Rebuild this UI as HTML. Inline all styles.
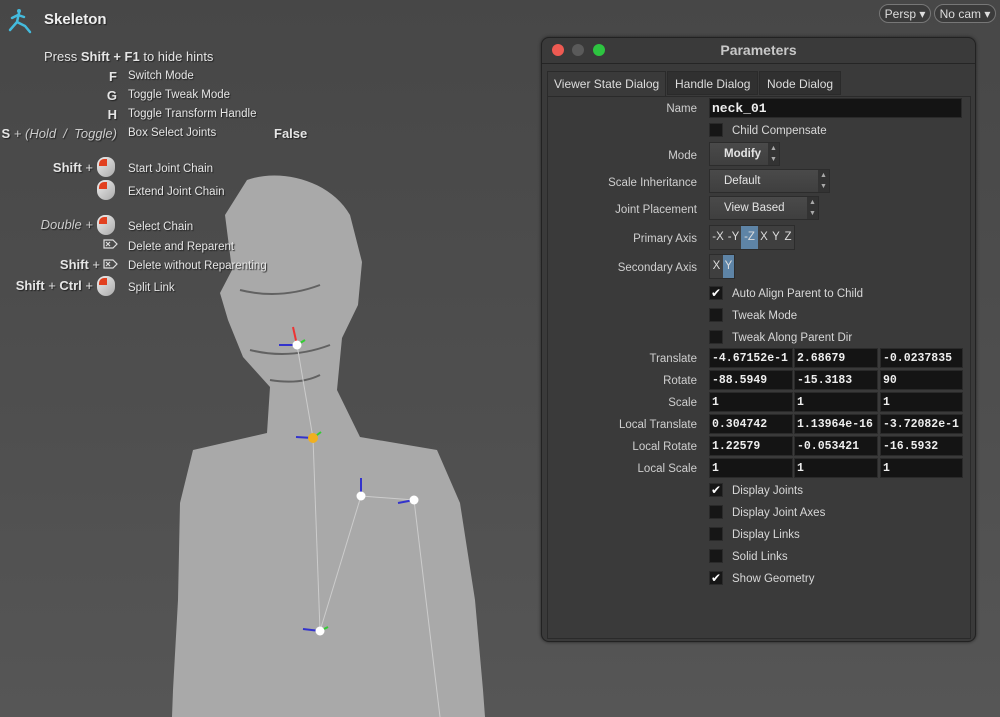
<!DOCTYPE html>
<html><head><meta charset="utf-8"><style>
*{box-sizing:border-box;margin:0;padding:0}
body{width:1000px;height:717px;overflow:hidden;position:relative;font-family:"Liberation Sans","DejaVu Sans",sans-serif;background:linear-gradient(#474747,#4f4f4f 60%,#565656);color:#ddd}
.a{position:absolute;white-space:nowrap}
.h{font-size:11.5px;color:#e6e6e6;text-shadow:1px 1px 1px #222}
.k{font-size:13px;font-weight:bold;color:#e6e6e6;text-shadow:1px 1px 1px #222;text-align:right}
.mouse{position:absolute;width:18px;height:20px;border-radius:8px 8px 9px 9px;background:linear-gradient(135deg,#eee,#aaa);}
.mouse:before{content:"";position:absolute;left:2px;top:2px;width:8px;height:7px;background:#e2401f;border-radius:5px 0 0 0}
.pill{position:absolute;top:4px;height:19px;border:1px solid #777;border-radius:10px;background:#3b3b3b;font-size:12px;color:#ddd;padding:2px 0;text-align:center;white-space:nowrap}
.panel{position:absolute;left:541px;top:37px;width:435px;height:605px;background:#3a3a3a;border:1px solid #222;border-radius:8px;box-shadow:0 0 3px #222}
.lbl{position:absolute;font-size:11.5px;color:#cfcfcf;right:278px;text-align:right;white-space:nowrap;margin-top:2px}
.f{position:absolute;height:20px;background:#141414;border:1px solid #2a2a2a;font-family:"Liberation Mono",monospace;font-weight:bold;font-size:11.5px;color:#eee;padding:3px 2px;overflow:hidden;white-space:nowrap}
.cb{position:absolute;left:167px;width:14px;height:14px;background:#161616;border:1px solid #2a2a2a;color:#fff;font-size:12px;line-height:12px;text-align:center}
.ct{position:absolute;left:190px;font-size:11.5px;color:#d8d8d8;white-space:nowrap;margin-top:2px}
.dd{position:absolute;left:167px;height:24px;background:linear-gradient(#4a4a4a,#3f3f3f);border:1px solid #2c2c2c;font-size:11.5px;color:#e4e4e4;padding:5px 0 0 14px}
.dd i{position:absolute;right:0;top:0;width:11px;height:22px;background:#333;font-style:normal;font-size:7px;line-height:11px;text-align:center;color:#aaa}
.ax{display:flex;position:absolute;top:187px;height:25px;background:#3f3f3f;border:1px solid #2c2c2c;font-size:11.5px;color:#ddd}
.ax span{display:block;text-align:center;line-height:23px}
.ax .s{background:#5e84a6}
</style></head><body>
<svg class="a" style="left:0;top:0" width="1000" height="717">
<path d="M247 180 C280 168 330 180 350 215 L362 262 L358 305 L342 338 L337 390 L360 437 L437 450 L460 503 L475 600 L483 690 L485 717 L172 717 L173 690 L178 600 L180 503 L193 450 L267 433 L270 387 L243 357 L228 320 L220 293 L232 270 L225 215 Z" fill="#a9a9a9"/>
<path d="M240 290 Q280 300 320 285 M250 350 Q290 360 330 345 M270 380 Q300 385 320 375" stroke="#333" stroke-width="2" fill="none" opacity=".6"/>
<g stroke="#ccc" stroke-width="1" fill="none"><path d="M297 345 L313 438 L320 631"/><path d="M361 496 L320 631"/><path d="M361 496 L414 500 L440 717"/></g>
<g stroke-width="2"><line x1="297" y1="345" x2="293" y2="327" stroke="#e33"/><line x1="297" y1="345" x2="279" y2="345" stroke="#33c"/><line x1="297" y1="345" x2="305" y2="340" stroke="#3c3"/>
<line x1="313" y1="438" x2="296" y2="437" stroke="#33c"/><line x1="313" y1="438" x2="321" y2="432" stroke="#3c3"/>
<line x1="361" y1="496" x2="361" y2="478" stroke="#33c"/><line x1="414" y1="500" x2="398" y2="503" stroke="#33c"/><line x1="320" y1="631" x2="303" y2="629" stroke="#33c"/><line x1="320" y1="631" x2="328" y2="627" stroke="#3c3"/></g>
<circle cx="297" cy="345" r="4.5" fill="#fff"/><circle cx="313" cy="438" r="5" fill="#f0b020"/><circle cx="361" cy="496" r="4.5" fill="#fff"/><circle cx="414" cy="500" r="4.5" fill="#fff"/><circle cx="320" cy="631" r="4.5" fill="#fff"/>
<g stroke="#4bd" stroke-width="2.5" fill="none" stroke-linecap="round"><path d="M19 13 L17 22 L10 30 M17 22 L25 26 L30 32 M18 15 L24 17 M18 15 L12 18"/></g><circle cx="19" cy="11" r="2" fill="#4bd"/>
<g stroke="#ddd" stroke-width="1.2" fill="none"><path d="M104 240 h9 l4 4 l-4 4 h-9 z M106 242 l4 4 M110 242 l-4 4"/><path d="M104 260 h9 l4 4 l-4 4 h-9 z M106 262 l4 4 M110 262 l-4 4"/></g>
</svg>
<div class="a" style="left:44px;top:11px;font-size:15px;font-weight:bold;color:#f0f0f0;text-shadow:1px 1px 1px #222">Skeleton</div>
<div class="a h" style="left:44px;top:49px;font-size:13px">Press <b>Shift + F1</b> to hide hints</div>
<div class="a k" style="left:0;width:117px;top:69px">F</div><div class="a h" style="left:128px;top:70px">Switch Mode</div>
<div class="a k" style="left:0;width:117px;top:88px">G</div><div class="a h" style="left:128px;top:89px">Toggle Tweak Mode</div>
<div class="a k" style="left:0;width:117px;top:107px">H</div><div class="a h" style="left:128px;top:108px">Toggle Transform Handle</div>
<div class="a k" style="left:0;width:117px;top:126px">S <span style="font-weight:normal;font-style:italic;color:#ccc">+ (Hold &nbsp;/ &nbsp;Toggle)</span></div><div class="a h" style="left:128px;top:127px">Box Select Joints</div>
<div class="a h" style="left:274px;top:126px;font-weight:bold;font-size:13px">False</div>
<div class="a k" style="left:0;width:93px;top:160px">Shift <span style="font-weight:normal">+</span></div><div class="mouse" style="left:97px;top:157px"></div><div class="a h" style="left:128px;top:163px">Start Joint Chain</div>
<div class="mouse" style="left:97px;top:180px"></div><div class="a h" style="left:128px;top:186px">Extend Joint Chain</div>
<div class="a k" style="left:0;width:93px;top:217px;font-weight:normal;font-style:italic;color:#ccc">Double +</div><div class="mouse" style="left:97px;top:215px"></div><div class="a h" style="left:128px;top:221px">Select Chain</div>
<div class="a h" style="left:128px;top:241px">Delete and Reparent</div>
<div class="a k" style="left:0;width:100px;top:257px">Shift <span style="font-weight:normal">+</span></div><div class="a h" style="left:128px;top:260px">Delete without Reparenting</div>
<div class="a k" style="left:0;width:93px;top:278px">Shift <span style="font-weight:normal">+</span> Ctrl <span style="font-weight:normal">+</span></div><div class="mouse" style="left:97px;top:276px"></div><div class="a h" style="left:128px;top:282px">Split Link</div>
<div class="pill" style="left:879px;width:52px">Persp ▾</div><div class="pill" style="left:934px;width:62px">No cam ▾</div>
<div class="panel">
<div class="a" style="left:10px;top:6px;width:12px;height:12px;border-radius:6px;background:#ee5a52"></div>
<div class="a" style="left:30px;top:6px;width:12px;height:12px;border-radius:6px;background:#5a5a5a"></div>
<div class="a" style="left:51px;top:6px;width:12px;height:12px;border-radius:6px;background:#2dc440"></div>
<div class="a" style="left:0;width:433px;top:4px;text-align:center;font-size:14px;font-weight:bold;color:#c8c8c8">Parameters</div>
<div class="a" style="left:0;top:25px;width:433px;border-top:1px solid #252525"></div>
<div class="a" style="left:5px;top:58px;width:424px;height:543px;border:1px solid #2a2a2a;background:#3a3a3a"></div>
<div class="a" style="left:5px;top:33px;width:119px;height:25px;background:#3a3a3a;border:1px solid #2a2a2a;border-bottom:none;font-size:12px;color:#ddd;padding:5px 0 0 6px">Viewer State Dialog</div>
<div class="a" style="left:125px;top:33px;width:91px;height:24px;background:#303030;border:1px solid #2a2a2a;font-size:12px;color:#ddd;padding:5px 0 0 7px">Handle Dialog</div>
<div class="a" style="left:217px;top:33px;width:82px;height:24px;background:#303030;border:1px solid #2a2a2a;font-size:12px;color:#ddd;padding:5px 0 0 7px">Node Dialog</div>
<div class="lbl" style="top:63px">Name</div><div class="f" style="left:167px;top:60px;width:253px;font-size:13px;padding-top:2px">neck_01</div>
<div class="cb" style="top:85px"></div><div class="ct" style="top:85px">Child Compensate</div>
<div class="lbl" style="top:110px">Mode</div><div class="dd" style="top:104px;width:71px;font-weight:bold;padding-left:14px">Modify<i>▲<br>▼</i></div>
<div class="lbl" style="top:137px">Scale Inheritance</div><div class="dd" style="top:131px;width:121px">Default<i>▲<br>▼</i></div>
<div class="lbl" style="top:164px">Joint Placement</div><div class="dd" style="top:158px;width:110px">View Based<i>▲<br>▼</i></div>
<div class="lbl" style="top:193px">Primary Axis</div>
<div class="ax" style="left:167px;width:86px"><span style="width:16px">-X</span><span style="width:15px">-Y</span><span class="s" style="width:17px">-Z</span><span style="width:12px">X</span><span style="width:12px">Y</span><span style="width:12px">Z</span></div>
<div class="lbl" style="top:222px">Secondary Axis</div>
<div class="ax" style="left:167px;top:216px;width:26px"><span style="width:13px">X</span><span class="s" style="width:11px">Y</span></div>
<div class="cb" style="top:248px">✔</div><div class="ct" style="top:248px">Auto Align Parent to Child</div>
<div class="cb" style="top:270px"></div><div class="ct" style="top:270px">Tweak Mode</div>
<div class="cb" style="top:292px"></div><div class="ct" style="top:292px">Tweak Along Parent Dir</div>
<div class="lbl" style="top:313px">Translate</div><div class="f" style="left:167px;top:310px;width:84px">-4.67152e-1</div><div class="f" style="left:252px;top:310px;width:84px">2.68679</div><div class="f" style="left:338px;top:310px;width:83px">-0.0237835</div>
<div class="lbl" style="top:335px">Rotate</div><div class="f" style="left:167px;top:332px;width:84px">-88.5949</div><div class="f" style="left:252px;top:332px;width:84px">-15.3183</div><div class="f" style="left:338px;top:332px;width:83px">90</div>
<div class="lbl" style="top:357px">Scale</div><div class="f" style="left:167px;top:354px;width:84px">1</div><div class="f" style="left:252px;top:354px;width:84px">1</div><div class="f" style="left:338px;top:354px;width:83px">1</div>
<div class="lbl" style="top:379px">Local Translate</div><div class="f" style="left:167px;top:376px;width:84px">0.304742</div><div class="f" style="left:252px;top:376px;width:84px">1.13964e-16</div><div class="f" style="left:338px;top:376px;width:83px">-3.72082e-1</div>
<div class="lbl" style="top:401px">Local Rotate</div><div class="f" style="left:167px;top:398px;width:84px">1.22579</div><div class="f" style="left:252px;top:398px;width:84px">-0.053421</div><div class="f" style="left:338px;top:398px;width:83px">-16.5932</div>
<div class="lbl" style="top:423px">Local Scale</div><div class="f" style="left:167px;top:420px;width:84px">1</div><div class="f" style="left:252px;top:420px;width:84px">1</div><div class="f" style="left:338px;top:420px;width:83px">1</div>
<div class="cb" style="top:445px">✔</div><div class="ct" style="top:445px">Display Joints</div>
<div class="cb" style="top:467px"></div><div class="ct" style="top:467px">Display Joint Axes</div>
<div class="cb" style="top:489px"></div><div class="ct" style="top:489px">Display Links</div>
<div class="cb" style="top:511px"></div><div class="ct" style="top:511px">Solid Links</div>
<div class="cb" style="top:533px">✔</div><div class="ct" style="top:533px">Show Geometry</div>
</div>
</body></html>
